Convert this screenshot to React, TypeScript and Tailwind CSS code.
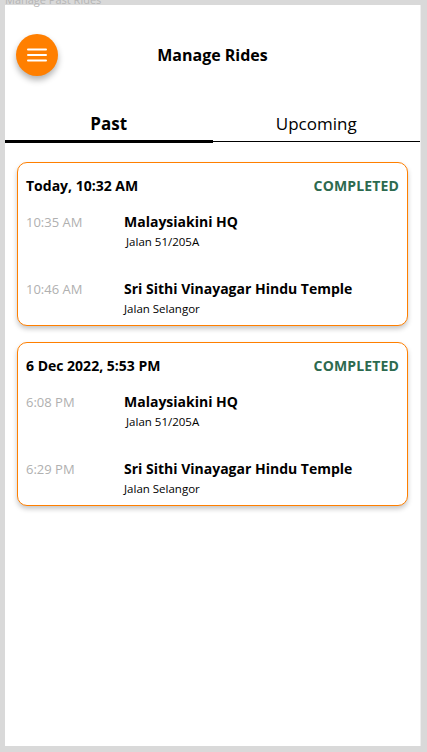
const rides = [
  {
    date: "Today, 10:32 AM",
    stops: [
      { time: "10:35 AM", name: "Malaysiakini HQ", addr: "Jalan 51/205A", indent: true },
      { time: "10:46 AM", name: "Sri Sithi Vinayagar Hindu Temple", addr: "Jalan Selangor", indent: false },
    ],
  },
  {
    date: "6 Dec 2022, 5:53 PM",
    stops: [
      { time: "6:08 PM", name: "Malaysiakini HQ", addr: "Jalan 51/205A", indent: true },
      { time: "6:29 PM", name: "Sri Sithi Vinayagar Hindu Temple", addr: "Jalan Selangor", indent: false },
    ],
  },
]

function RideCard({ ride }: { ride: (typeof rides)[number] }) {
  return (
    <div className="mx-[12px] h-[164px] rounded-[10px] border border-[#ff7f00] bg-white pl-[8px] pr-[8px] pt-[13px] shadow-[0_3px_5px_rgba(0,0,0,0.22)]">
      <div className="flex items-center justify-between">
        <span className="text-[14px] font-bold leading-[20px] text-black">{ride.date}</span>
        <span className="text-[14px] font-bold leading-[20px] tracking-[0.01em] text-[#2d6a4f]">COMPLETED</span>
      </div>
      <div className="mt-[16px] flex flex-col gap-[27px]">
        {ride.stops.map((s) => (
          <div key={s.time} className="flex">
            <span className="w-[98px] shrink-0 text-[13px] leading-[20px] text-[#b0b0b0]">{s.time}</span>
            <div className="flex flex-col">
              <span className="text-[14px] font-bold leading-[20px] text-black">{s.name}</span>
              <span className={`${s.indent ? "pl-[2px]" : "pl-0"} text-[11.5px] leading-[20px] text-black`}>{s.addr}</span>
            </div>
          </div>
        ))}
      </div>
    </div>
  )
}

export default function App() {
  return (
    <div
      className="relative h-[752px] w-[427px] overflow-hidden bg-[#d9d9d9] p-[5px] pr-[6px]"
      style={{ fontFamily: '"Open Sans", "Noto Sans", sans-serif' }}
    >
      <div className="absolute left-[5px] top-[-8px] text-[11px] text-[#b5b5b5]">Manage Past Rides</div>
      <div className="flex h-[741px] flex-col border-r border-[#eeeeee] bg-white">
        <div className="flex h-[100px] items-center px-[11px]">
          <button className="flex h-[42px] w-[42px] items-center justify-center rounded-full bg-[#ff7f00] shadow-[0_4px_6px_rgba(0,0,0,0.3)]">
            <svg width="20" height="16" viewBox="0 0 20 16">
              <rect x="0" y="1.5" width="20" height="2" rx="1" fill="white" />
              <rect x="0" y="7" width="20" height="2" rx="1" fill="white" />
              <rect x="0" y="12.5" width="20" height="2" rx="1" fill="white" />
            </svg>
          </button>
          <h1 className="flex-1 pr-[42px] text-center text-[16px] font-bold text-black">Manage Rides</h1>
        </div>
        <div className="flex">
          <div className="flex h-[38px] flex-1 items-start justify-center border-b-[3px] border-black pt-[6px] text-[17px] font-bold text-black">
            Past
          </div>
          <div className="flex h-[38px] flex-1 items-start justify-center pt-[6px] text-[17px] text-black">
            <span>Upcoming</span>
          </div>
        </div>
        <div className="-mt-[2px] ml-[208px] h-px bg-black" />
        <div className="mt-[20px] flex flex-col gap-[16px]">
          {rides.map((r) => (
            <RideCard key={r.date} ride={r} />
          ))}
        </div>
      </div>
    </div>
  )
}
